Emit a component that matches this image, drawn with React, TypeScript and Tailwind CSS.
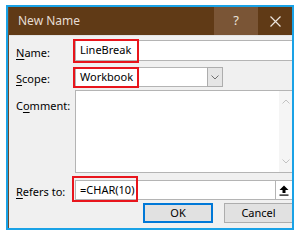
import React from 'react'

const font = { fontFamily: '"Noto Sans", "Liberation Sans", sans-serif' }

const Label: React.FC<{ pre?: string; u: string; post: string }> = ({ pre = '', u, post }) => (
  <span className="text-[11px] leading-[15px] text-black">
    {pre}
    <span className="underline underline-offset-[2px]">{u}</span>
    {post}
  </span>
)

const RedBox: React.FC<{ className: string }> = ({ className }) => (
  <div className={`pointer-events-none absolute border-2 border-[#e8151c] ${className}`} />
)

export default function App() {
  return (
    <div className="h-[236px] w-[300px] bg-white pl-[6px] pt-[5px]" style={font}>
      <div className="h-[225px] w-[288px] overflow-hidden border-2 border-[#1aa2e6]">
        <div className="flex h-full flex-col border-l border-[#6b4a2c] bg-[#f0f0f0]">
          {/* title bar */}
          <div className="flex h-[28px] shrink-0 items-center bg-[#603a16]">
            <span className="flex-1 pl-[9px] text-[12px] text-[#e6ddd4]">New Name</span>
            <div className="flex h-full w-[44px] items-center justify-center bg-[#7a5536] text-[13px] text-[#ece4dc]">
              ?
            </div>
            <div className="flex h-full w-[34px] items-center justify-center">
              <svg width="11" height="11" viewBox="0 0 11 11">
                <path d="M0.5 0.5 L10.5 10.5 M10.5 0.5 L0.5 10.5" stroke="#ece4dc" strokeWidth="1.2" />
              </svg>
            </div>
          </div>
          <div className="h-px shrink-0 bg-[#e3e3e3]" />

          {/* body */}
          <div className="flex flex-1 flex-col pt-[4px]">
            {/* Name */}
            <div className="flex h-[21px] items-center">
              <div className="w-[66px] pl-[7px]">
                <Label u="N" post="ame:" />
              </div>
              <div className="relative h-full flex-1">
                <div className="flex h-full items-center border border-r-0 border-[#b4b4b4] bg-white pl-[4px] text-[11px] text-black">
                  LineBreak
                </div>
                <RedBox className="-left-[2px] -top-[1px] h-[24px] w-[66px]" />
              </div>
            </div>

            {/* Scope */}
            <div className="mt-[6px] flex h-[20px] items-center">
              <div className="w-[66px] pl-[7px]">
                <Label u="S" post="cope:" />
              </div>
              <div className="relative flex h-full">
                <div className="flex h-full w-[132px] items-center border border-r-0 border-[#b4b4b4] bg-white pl-[4px] text-[11px] text-black">
                  Workbook
                </div>
                <div className="flex h-full w-[16px] items-center justify-center border border-[#adadad] bg-[#e5e5e5]">
                  <svg width="8" height="5" viewBox="0 0 8 5">
                    <path d="M0.5 0.5 L4 4 L7.5 0.5" fill="none" stroke="#6f6f6f" strokeWidth="1" />
                  </svg>
                </div>
                <RedBox className="-left-[2px] top-0 h-[21px] w-[66px]" />
              </div>
            </div>

            {/* Comment */}
            <div className="mt-[3px] flex h-[83px]">
              <div className="w-[66px] pl-[7px] pt-[2px]">
                <Label pre="C" u="o" post="mment:" />
              </div>
              <div className="flex h-full flex-1 border border-r-0 border-[#b4b4b4] bg-white">
                <div className="flex-1" />
                <div className="flex w-[13px] flex-col items-center justify-between bg-[#f5f5f5] py-[8px]">
                  <svg width="8" height="5" viewBox="0 0 8 5">
                    <path d="M0.5 4.5 L4 1 L7.5 4.5" fill="none" stroke="#c2c2c2" strokeWidth="1" />
                  </svg>
                  <svg width="8" height="5" viewBox="0 0 8 5">
                    <path d="M0.5 0.5 L4 4 L7.5 0.5" fill="none" stroke="#c2c2c2" strokeWidth="1" />
                  </svg>
                </div>
              </div>
            </div>

            {/* Refers to */}
            <div className="mt-[7px] flex h-[20px] items-center">
              <div className="w-[66px] pl-[7px]">
                <Label u="R" post="efers to:" />
              </div>
              <div className="relative flex h-full flex-1">
                <div className="flex h-full flex-1 items-center border border-r-0 border-[#b4b4b4] bg-white pl-[4px] text-[11px] text-black">
                  =CHAR(10)
                </div>
                <div className="flex h-full w-[17px] items-center justify-center border border-r-0 border-[#b4b4b4] bg-white">
                  <svg width="10" height="11" viewBox="0 0 10 11">
                    <path d="M5 0.5 L9.5 5 L6.5 5 L6.5 8 L3.5 8 L3.5 5 L0.5 5 Z" fill="#000" />
                    <rect x="0.5" y="9.5" width="9" height="1.2" fill="#000" />
                  </svg>
                </div>
                <RedBox className="-left-[3px] -top-[4px] h-[26px] w-[66px]" />
              </div>
            </div>

            {/* buttons */}
            <div className="mt-[3px] flex h-[20px] pl-[134px]">
              <div className="flex h-full w-[70px] items-center justify-center border-2 border-[#0078d7] bg-[#e1e1e1] text-[11px] text-black">
                OK
              </div>
              <div className="ml-[11px] flex h-full flex-1 items-center justify-center border border-r-0 border-[#adadad] bg-[#e1e1e1] text-[11px] text-black">
                Cancel
              </div>
            </div>
          </div>
        </div>
      </div>
    </div>
  )
}
